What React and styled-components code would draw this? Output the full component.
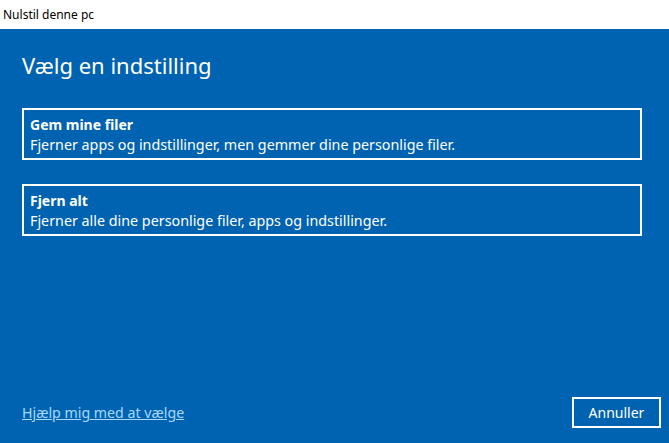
import React from "react";
import styled, { createGlobalStyle } from "styled-components";

const GlobalStyle = createGlobalStyle`
  html, body {
    margin: 0;
    padding: 0;
    height: 100%;
  }
  body {
    font-family: "Noto Sans", "Open Sans", sans-serif;
    overflow: hidden;
  }
  #root {
    height: 100%;
  }
`;

const options = [
  {
    title: "Gem mine filer",
    text: "Fjerner apps og indstillinger, men gemmer dine personlige filer.",
  },
  {
    title: "Fjern alt",
    text: "Fjerner alle dine personlige filer, apps og indstillinger.",
  },
];

function App() {
  return (
    <>
      <GlobalStyle />
      <Window>
        <TitleBar>Nulstil denne pc</TitleBar>
        <Body>
          <Heading>Vælg en indstilling</Heading>
          <OptionList>
            {options.map((option) => (
              <Option key={option.title} type="button">
                <OptionTitle>{option.title}</OptionTitle>
                <OptionText>{option.text}</OptionText>
              </Option>
            ))}
          </OptionList>
          <Footer>
            <HelpLink href="#">Hjælp mig med at vælge</HelpLink>
            <CancelButton type="button">Annuller</CancelButton>
          </Footer>
        </Body>
      </Window>
    </>
  );
}

export default App;

const Window = styled.div`
  display: flex;
  flex-direction: column;
  height: 100%;
  background-color: #0063b1;
`;

const TitleBar = styled.div`
  display: flex;
  align-items: center;
  height: 29px;
  padding-left: 3px;
  background-color: #ffffff;
  color: #000000;
  font-size: 12px;
  box-sizing: border-box;
`;

const Body = styled.div`
  flex: 1;
  display: flex;
  flex-direction: column;
  padding: 17px 8px 15px 22px;
  color: #ffffff;
`;

const Heading = styled.h1`
  margin: 0 0 24px;
  font-size: 22px;
  font-weight: 400;
  line-height: 38px;
`;

const OptionList = styled.div`
  display: flex;
  flex-direction: column;
  gap: 24px;
  width: 620px;
`;

const Option = styled.button`
  display: flex;
  flex-direction: column;
  align-items: flex-start;
  height: 52px;
  padding: 5px 6px 0;
  border: 2px solid #ffffff;
  background: transparent;
  color: #ffffff;
  font-family: inherit;
  text-align: left;
  cursor: pointer;
  box-sizing: border-box;
`;

const OptionTitle = styled.span`
  font-size: 14px;
  font-weight: 700;
  line-height: 19px;
`;

const OptionText = styled.span`
  font-size: 14.3px;
  line-height: 21px;
`;

const Footer = styled.div`
  margin-top: auto;
  display: flex;
  justify-content: space-between;
  align-items: center;
`;

const HelpLink = styled.a`
  color: #a6d8ff;
  font-size: 14.2px;
  text-decoration: underline;
`;

const CancelButton = styled.button`
  width: 89px;
  height: 31px;
  border: 2px solid #ffffff;
  background: transparent;
  color: #ffffff;
  font-family: inherit;
  font-size: 14px;
  cursor: pointer;
  box-sizing: border-box;
`;
